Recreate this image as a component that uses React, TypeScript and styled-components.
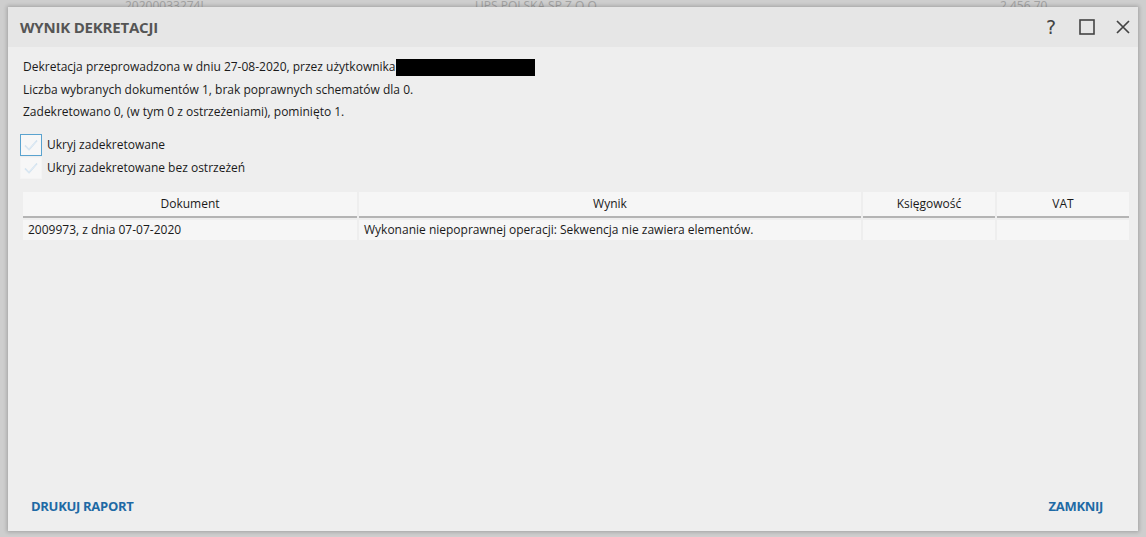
import React from "react";
import styled, { createGlobalStyle } from "styled-components";

const Global = createGlobalStyle`
  html, body { margin: 0; padding: 0; }
  body {
    width: 1146px; height: 537px; overflow: hidden;
    background: #cdcdcd;
    font-family: "Open Sans", "Noto Sans", sans-serif;
  }
`;

const Page = styled.div`
  position: relative;
  width: 1146px;
  height: 537px;
  background: #cecece;
`;

const BgRow = styled.div`
  display: grid;
  grid-template-columns: 125px 350px 525px 146px;
  height: 16px;
  padding-top: 0;
  font-size: 12px;
  color: #a2a2a2;
  line-height: 12px;
`;

const BgCell = styled.div<{ $col: number }>`
  grid-column: ${(p) => p.$col};
`;

const Dialog = styled.div`
  position: absolute;
  left: 8px;
  top: 7px;
  width: 1130px;
  height: 524px;
  background: #eeeeee;
  box-shadow: 0 0 4px 1px rgba(0, 0, 0, 0.22);
  display: flex;
  flex-direction: column;
`;

const Header = styled.div`
  height: 40px;
  background: #e6e6e6;
  display: flex;
  align-items: center;
  padding: 0 0 0 12px;
`;

const Title = styled.div`
  flex: 1;
  font-size: 15px;
  font-weight: 700;
  color: #555555;
  letter-spacing: -0.2px;
`;

const Icons = styled.div`
  display: flex;
  align-items: center;
  margin-right: -3px;
`;

const IconBtn = styled.div`
  width: 36px;
  height: 40px;
  display: flex;
  align-items: center;
  justify-content: center;
  color: #444;
  font-size: 19px;
  font-family: "DejaVu Sans", sans-serif;
`;

const Body = styled.div`
  flex: 1;
  display: flex;
  flex-direction: column;
  padding: 9px 7px 0 15px;
`;

const InfoLine = styled.div`
  font-size: 12px;
  color: #1a1a1a;
  height: 22.5px;
  line-height: 22px;
  display: flex;
  align-items: center;
  letter-spacing: 0;
`;

const Redacted = styled.span`
  display: inline-block;
  width: 139px;
  height: 17px;
  background: #000;
`;

const Checks = styled.div`
  display: flex;
  flex-direction: column;
  gap: 1px;
  margin: 10px 0 0 -3px;
`;

const CheckRow = styled.label`
  display: flex;
  align-items: center;
  gap: 5px;
  font-size: 12px;
  color: #1a1a1a;
  letter-spacing: 0;
`;

const Box = styled.span<{ $focus?: boolean }>`
  width: 22px;
  height: 22px;
  box-sizing: border-box;
  border: 1px solid ${(p) => (p.$focus ? "#5aa3cf" : "#f4f4f4")};
  background: #f7f7f7;
  display: flex;
  align-items: center;
  justify-content: center;
`;

const Table = styled.div`
  margin-top: 13px;
  width: 1106px;
  display: grid;
  grid-template-columns: 334px 502px 132px 132px;
  column-gap: 2px;
`;

const HeadCell = styled.div`
  height: 24px;
  background: #f6f6f6;
  border-bottom: 2px solid #b4b4b4;
  font-size: 12px;
  color: #1a1a1a;
  display: flex;
  align-items: center;
  justify-content: center;
`;

const Cell = styled.div`
  margin-top: 2px;
  height: 20px;
  background: #f6f6f6;
  font-size: 12px;
  color: #1a1a1a;
  display: flex;
  align-items: center;
  padding-left: 5px;
`;

const Spacer = styled.div`
  flex: 1;
`;

const Footer = styled.div`
  display: flex;
  justify-content: space-between;
  align-items: center;
  height: 50px;
  padding: 0 35px 0 23px;
`;

const Action = styled.div`
  font-size: 13px;
  font-weight: 700;
  color: #1e6aa5;
  letter-spacing: -0.3px;
  margin-bottom: 0px;
`;

const Check = () => (
  <svg width="16" height="14" viewBox="0 0 16 14">
    <path d="M2 7.5 L6 11.5 L14 2.5" fill="none" stroke="#cfe1ee" strokeWidth="1.6" />
    <path d="M3 8.5 L6 11.5 L13 3.5" fill="none" stroke="#e4eef6" strokeWidth="0.8" />
  </svg>
);

export default function App() {
  return (
    <Page>
      <Global />
      <BgRow>
        <BgCell $col={2}>20200033274!</BgCell>
        <BgCell $col={3}>UPS POLSKA SP.Z O.O.</BgCell>
        <BgCell $col={4}>2 456,70</BgCell>
      </BgRow>
      <Dialog>
        <Header>
          <Title>WYNIK DEKRETACJI</Title>
          <Icons>
            <IconBtn>?</IconBtn>
            <IconBtn>
              <svg width="16" height="16" viewBox="0 0 16 16">
                <rect x="1" y="1" width="14" height="14" fill="none" stroke="#444" strokeWidth="1.6" />
              </svg>
            </IconBtn>
            <IconBtn>
              <svg width="16" height="16" viewBox="0 0 16 16">
                <path d="M2 2 L14 14 M14 2 L2 14" stroke="#444" strokeWidth="1.7" />
              </svg>
            </IconBtn>
          </Icons>
        </Header>
        <Body>
          <InfoLine>
            Dekretacja przeprowadzona w dniu 27-08-2020, przez użytkownika
            <Redacted />
          </InfoLine>
          <InfoLine>Liczba wybranych dokumentów 1, brak poprawnych schematów dla 0.</InfoLine>
          <InfoLine>Zadekretowano 0, (w tym 0 z ostrzeżeniami), pominięto 1.</InfoLine>
          <Checks>
            <CheckRow>
              <Box $focus>
                <Check />
              </Box>
              Ukryj zadekretowane
            </CheckRow>
            <CheckRow>
              <Box>
                <Check />
              </Box>
              Ukryj zadekretowane bez ostrzeżeń
            </CheckRow>
          </Checks>
          <Table>
            <HeadCell>Dokument</HeadCell>
            <HeadCell>Wynik</HeadCell>
            <HeadCell>Księgowość</HeadCell>
            <HeadCell>VAT</HeadCell>
            <Cell>2009973, z dnia 07-07-2020</Cell>
            <Cell>Wykonanie niepoprawnej operacji: Sekwencja nie zawiera elementów.</Cell>
            <Cell />
            <Cell />
          </Table>
          <Spacer />
        </Body>
        <Footer>
          <Action>DRUKUJ RAPORT</Action>
          <Action>ZAMKNIJ</Action>
        </Footer>
      </Dialog>
    </Page>
  );
}
